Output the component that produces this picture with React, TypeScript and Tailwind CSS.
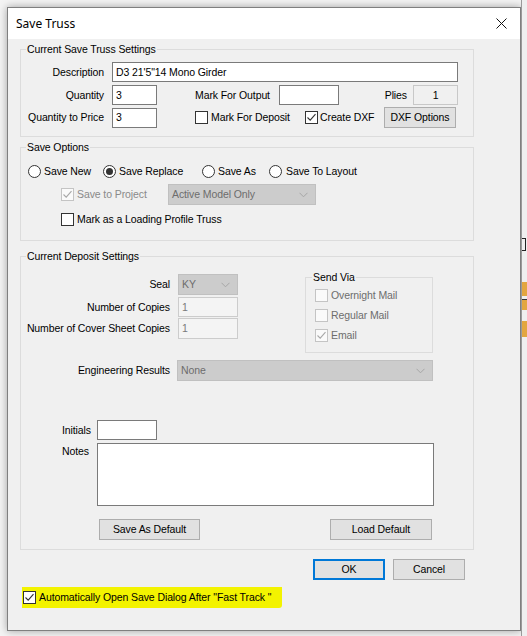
import React from "react";

const FONT = "font-['Liberation_Sans',Arial,sans-serif]";

function CheckMark({ color }: { color: string }) {
  return (
    <svg width="11" height="11" viewBox="0 0 11 11">
      <path d="M1.5 5.5 L4.2 8.2 L9.5 2.2" fill="none" stroke={color} strokeWidth="1.1" />
    </svg>
  );
}

function Box({ checked, disabled }: { checked?: boolean; disabled?: boolean }) {
  return (
    <span
      className={
        disabled
          ? "w-[13px] h-[13px] shrink-0 border border-[#c4c4c4] bg-[#fafafa] flex items-center justify-center"
          : "w-[13px] h-[13px] shrink-0 border border-[#333333] bg-white flex items-center justify-center"
      }
    >
      {checked ? <CheckMark color={disabled ? "#a8a8a8" : "#333333"} /> : null}
    </span>
  );
}

function Radio({ selected }: { selected?: boolean }) {
  return (
    <span className="w-[13px] h-[13px] shrink-0 rounded-full border border-[#333333] bg-white flex items-center justify-center">
      {selected ? <span className="w-[7px] h-[7px] rounded-full bg-[#333333]" /> : null}
    </span>
  );
}

function Chevron() {
  return (
    <svg width="9" height="6" viewBox="0 0 9 6">
      <path d="M0.5 0.8 L4.5 4.8 L8.5 0.8" fill="none" stroke="#a6a6a6" strokeWidth="1" />
    </svg>
  );
}

function DisabledSelect({ text, w }: { text: string; w: string }) {
  return (
    <div className={`${w} h-[21px] bg-[#cccccc] border border-[#c0c0c0] flex items-center justify-between pl-[3px] pr-[7px] text-[#6d6d6d]`}>
      <span>{text}</span>
      <Chevron />
    </div>
  );
}

function Btn({ label, w, primary }: { label: string; w: string; primary?: boolean }) {
  return (
    <div
      className={
        primary
          ? `${w} h-[21px] bg-[#e1e1e1] border-2 border-[#0078d7] flex items-center justify-center text-black`
          : `${w} h-[21px] bg-[#e1e1e1] border border-[#adadad] flex items-center justify-center text-black`
      }
    >
      {label}
    </div>
  );
}

function Group({ title, h, children }: { title: string; h: string; children: React.ReactNode }) {
  return (
    <div className={`relative ml-[12px] w-[454px] ${h} border border-[#dcdcdc]`}>
      <span className="absolute -top-[8px] left-[5px] bg-[#f0f0f0] px-[1px] leading-[14px] text-black">{title}</span>
      {children}
    </div>
  );
}

export default function App() {
  return (
    <div className={`w-[527px] h-[636px] bg-[#f4f4f4] flex overflow-hidden whitespace-nowrap ${FONT} text-[10.5px] leading-[13px] tracking-[-0.1px] text-black`}>
      <div className="w-[7px] shrink-0" />
      <div className="mt-[7px] w-[514px] h-[624px] shrink-0 border border-[#7f7f7f] bg-[#f0f0f0] flex flex-col shadow-[0_0_8px_rgba(0,0,0,0.35)]">
        {/* Title bar */}
        <div className="h-[31px] bg-white flex items-center justify-between pl-[8px] pr-[13px]">
          <span className="text-[12px] tracking-normal text-black font-['Noto_Sans','Liberation_Sans',sans-serif]">Save Truss</span>
          <svg width="11" height="11" viewBox="0 0 11 11">
            <path d="M0.5 0.5 L10.5 10.5 M10.5 0.5 L0.5 10.5" stroke="#111111" strokeWidth="1" />
          </svg>
        </div>

        {/* Group 1 */}
        <div className="mt-[10px]">
          <Group title="Current Save Truss Settings" h="h-[88px]">
            <div className="mt-[12px] flex items-center h-[20px]">
              <span className="w-[83px] text-right">Description</span>
              <div className="ml-[8px] w-[346px] h-[20px] bg-white border border-[#7a7a7a] flex items-center px-[3px]">D3 21'5"14 Mono Girder</div>
            </div>
            <div className="mt-[3px] flex items-center h-[20px]">
              <span className="w-[83px] text-right">Quantity</span>
              <div className="ml-[8px] w-[45px] h-[20px] bg-white border border-[#7a7a7a] flex items-center px-[3px]">3</div>
              <span className="ml-[38px] w-[80px]">Mark For Output</span>
              <div className="ml-[4px] w-[60px] h-[20px] bg-white border border-[#7a7a7a]" />
              <span className="w-[68px] text-right">Plies</span>
              <div className="ml-[6px] w-[45px] h-[20px] bg-[#f0f0f0] border border-[#c8c8c8] flex items-center justify-center">1</div>
            </div>
            <div className="mt-[2px] flex items-center h-[21px]">
              <span className="w-[83px] text-right">Quantity to Price</span>
              <div className="ml-[8px] w-[45px] h-[20px] bg-white border border-[#7a7a7a] flex items-center px-[3px]">3</div>
              <div className="ml-[38px] w-[110px] flex items-center">
                <Box />
                <span className="ml-[3px]">Mark For Deposit</span>
              </div>
              <div className="w-[79px] flex items-center">
                <Box checked />
                <span className="ml-[2px]">Create DXF</span>
              </div>
              <Btn label="DXF Options" w="w-[72px]" />
            </div>
          </Group>
        </div>

        {/* Group 2 */}
        <div className="mt-[10px]">
          <Group title="Save Options" h="h-[94px]">
            <div className="mt-[17px] pl-[7px] flex items-center h-[13px]">
              <div className="w-[75px] flex items-center">
                <Radio />
                <span className="ml-[3px]">Save New</span>
              </div>
              <div className="w-[99px] flex items-center">
                <Radio selected />
                <span className="ml-[3px]">Save Replace</span>
              </div>
              <div className="w-[67px] flex items-center">
                <Radio />
                <span className="ml-[3px]">Save As</span>
              </div>
              <div className="flex items-center">
                <Radio />
                <span className="ml-[4px]">Save To Layout</span>
              </div>
            </div>
            <div className="mt-[6px] pl-[40px] flex items-center h-[21px]">
              <div className="w-[107px] flex items-center">
                <Box checked disabled />
                <span className="ml-[3px] text-[#8a8a8a]">Save to Project</span>
              </div>
              <DisabledSelect text="Active Model Only" w="w-[148px]" />
            </div>
            <div className="mt-[8px] pl-[40px] flex items-center h-[13px]">
              <Box />
              <span className="ml-[3px]">Mark as a Loading Profile Truss</span>
            </div>
          </Group>
        </div>

        {/* Group 3 */}
        <div className="mt-[15px]">
          <Group title="Current Deposit Settings" h="h-[294px]">
            <div className="flex items-start">
              <div className="w-[217px] flex flex-col">
                <div className="mt-[17px] flex items-center h-[21px]">
                  <span className="w-[149px] text-right">Seal</span>
                  <div className="ml-[8px]">
                    <DisabledSelect text="KY" w="w-[60px]" />
                  </div>
                </div>
                <div className="mt-[2px] flex items-center h-[20px]">
                  <span className="w-[149px] text-right">Number of Copies</span>
                  <div className="ml-[8px] w-[60px] h-[20px] bg-[#f4f4f4] border border-[#cccccc] flex items-center px-[3px] text-[#7a7a7a]">1</div>
                </div>
                <div className="mt-[1px] flex items-center h-[21px]">
                  <span className="w-[149px] text-right">Number of Cover Sheet Copies</span>
                  <div className="ml-[8px] w-[60px] h-[21px] bg-[#f4f4f4] border border-[#cccccc] flex items-center px-[3px] text-[#7a7a7a]">1</div>
                </div>
              </div>
              <div className="relative ml-[67px] mt-[20px] w-[128px] h-[76px] border border-[#dcdcdc]">
                <span className="absolute -top-[8px] left-[6px] bg-[#f0f0f0] px-[1px] leading-[14px]">Send Via</span>
                <div className="mt-[11px] pl-[9px] flex flex-col gap-[7px]">
                  <div className="flex items-center h-[13px]">
                    <Box disabled />
                    <span className="ml-[3px] text-[#6d6d6d]">Overnight Mail</span>
                  </div>
                  <div className="flex items-center h-[13px]">
                    <Box disabled />
                    <span className="ml-[3px] text-[#6d6d6d]">Regular Mail</span>
                  </div>
                  <div className="flex items-center h-[13px]">
                    <Box checked disabled />
                    <span className="ml-[3px] text-[#6d6d6d]">Email</span>
                  </div>
                </div>
              </div>
            </div>
            <div className="mt-[7px] flex items-center h-[21px]">
              <span className="w-[149px] text-right">Engineering Results</span>
              <div className="ml-[7px]">
                <DisabledSelect text="None" w="w-[256px]" />
              </div>
            </div>
            <div className="mt-[39px] pl-[41px] flex items-center h-[20px]">
              <span className="w-[35px]">Initials</span>
              <div className="w-[60px] h-[20px] bg-white border border-[#7a7a7a]" />
            </div>
            <div className="mt-[3px] pl-[41px] flex items-start">
              <span className="w-[35px] pt-[2px]">Notes</span>
              <div className="w-[337px] h-[63px] bg-white border border-[#7a7a7a]" />
            </div>
            <div className="mt-[13px] pl-[78px] flex items-center">
              <Btn label="Save As Default" w="w-[101px]" />
              <div className="ml-[130px]">
                <Btn label="Load Default" w="w-[102px]" />
              </div>
            </div>
          </Group>
        </div>

        {/* OK / Cancel */}
        <div className="mt-[9px] ml-[305px] flex items-center">
          <Btn label="OK" w="w-[72px]" primary />
          <div className="ml-[8px]">
            <Btn label="Cancel" w="w-[72px]" />
          </div>
        </div>

        {/* Bottom checkbox with highlight */}
        <div className="mt-[7px] ml-[14px] flex">
          <div className="w-[260px] h-[21px] bg-[#f3f300] flex items-center pl-[1px] rounded-br-[3px]">
            <Box checked />
            <span className="ml-[3px] text-black">Automatically Open Save Dialog After "Fast Track "</span>
          </div>
        </div>
      </div>

      {/* background app strip */}
      <div className="w-[6px] shrink-0 bg-[#efefef] border-l border-[#9a9a9a] flex flex-col">
        <div className="mt-[238px] h-[13px] w-[4px] border border-l-0 border-[#222222]" />
        <div className="mt-[31px] h-[14px] bg-[#e3a640]" />
        <div className="mt-[3px] h-[11px] bg-[#e3a640] border-t border-[#333333]" />
        <div className="mt-[11px] h-[16px] bg-[#e3a640]" />
      </div>
    </div>
  );
}
